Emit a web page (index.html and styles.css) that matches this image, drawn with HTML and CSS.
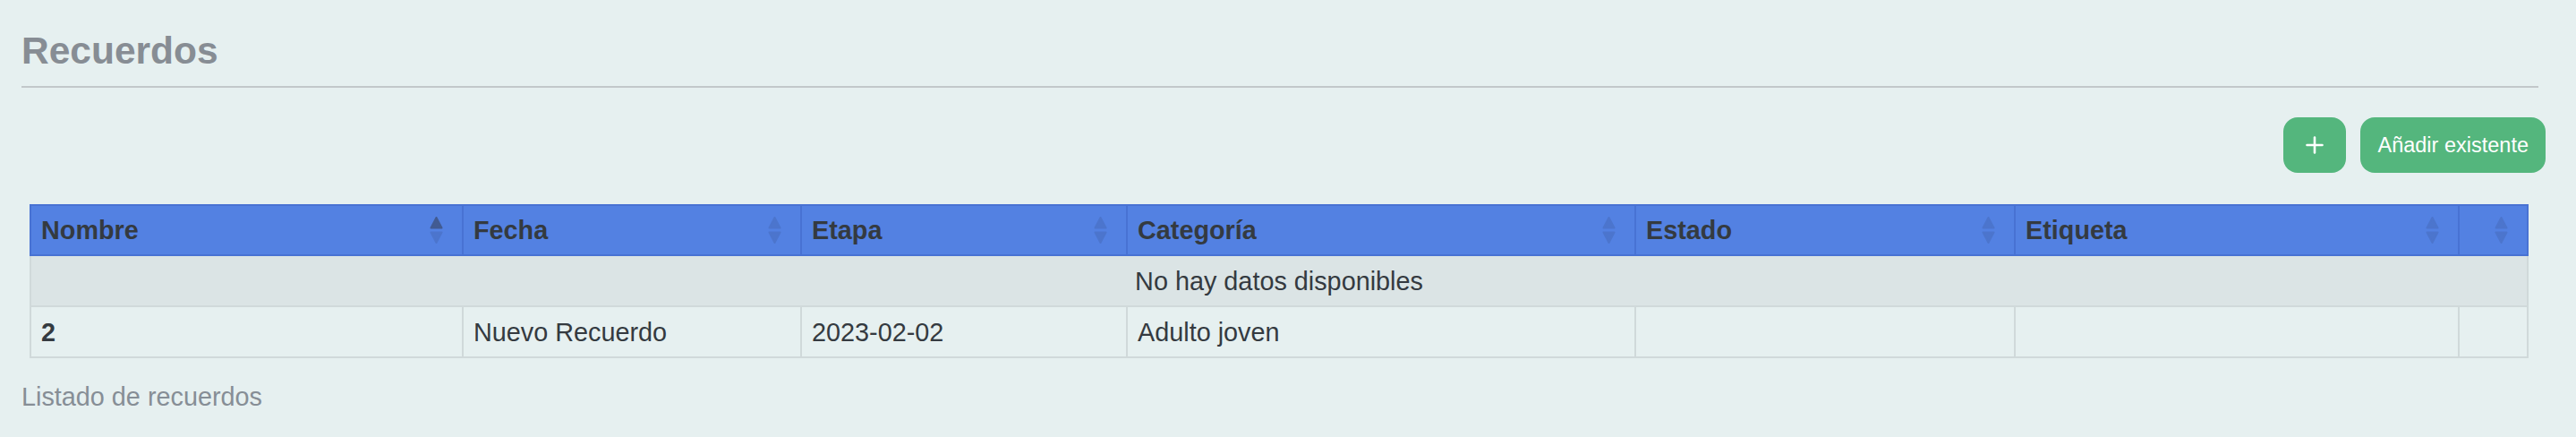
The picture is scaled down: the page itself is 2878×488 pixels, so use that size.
FILE: index.html
```html
<!DOCTYPE html>
<html lang="es">
<head>
<meta charset="utf-8">
<title>Recuerdos</title>
<link rel="stylesheet" href="styles.css">
</head>
<body>
<main class="page">
  <header class="page-header">
    <h1 class="page-title">Recuerdos</h1>
  </header>

  <div class="toolbar">
    <button class="btn btn-icon" type="button" aria-label="Añadir">
      <svg width="20" height="20" viewBox="0 0 20 20" aria-hidden="true"><path d="M10 1.5v17M1.5 10h17" stroke="#fff" stroke-width="2.6" stroke-linecap="round" fill="none"/></svg>
    </button>
    <button class="btn" type="button">Añadir existente</button>
  </div>

  <div class="table-wrap">
    <table class="records">
      <colgroup>
        <col class="c-nombre"><col class="c-fecha"><col class="c-etapa"><col class="c-categoria"><col class="c-estado"><col class="c-etiqueta"><col class="c-acciones">
      </colgroup>
      <thead>
        <tr>
          <th><div class="th-inner"><span>Nombre</span><svg class="sort sort-asc" width="15" height="32" viewBox="0 0 15 32" aria-hidden="true"><polygon class="up" points="7.5,2 13.5,13.5 1.5,13.5"/><polygon class="down" points="1.5,18.5 13.5,18.5 7.5,30"/></svg></div></th>
          <th><div class="th-inner"><span>Fecha</span><svg class="sort" width="15" height="32" viewBox="0 0 15 32" aria-hidden="true"><polygon class="up" points="7.5,2 13.5,13.5 1.5,13.5"/><polygon class="down" points="1.5,18.5 13.5,18.5 7.5,30"/></svg></div></th>
          <th><div class="th-inner"><span>Etapa</span><svg class="sort" width="15" height="32" viewBox="0 0 15 32" aria-hidden="true"><polygon class="up" points="7.5,2 13.5,13.5 1.5,13.5"/><polygon class="down" points="1.5,18.5 13.5,18.5 7.5,30"/></svg></div></th>
          <th><div class="th-inner"><span>Categoría</span><svg class="sort" width="15" height="32" viewBox="0 0 15 32" aria-hidden="true"><polygon class="up" points="7.5,2 13.5,13.5 1.5,13.5"/><polygon class="down" points="1.5,18.5 13.5,18.5 7.5,30"/></svg></div></th>
          <th><div class="th-inner"><span>Estado</span><svg class="sort" width="15" height="32" viewBox="0 0 15 32" aria-hidden="true"><polygon class="up" points="7.5,2 13.5,13.5 1.5,13.5"/><polygon class="down" points="1.5,18.5 13.5,18.5 7.5,30"/></svg></div></th>
          <th><div class="th-inner"><span>Etiqueta</span><svg class="sort" width="15" height="32" viewBox="0 0 15 32" aria-hidden="true"><polygon class="up" points="7.5,2 13.5,13.5 1.5,13.5"/><polygon class="down" points="1.5,18.5 13.5,18.5 7.5,30"/></svg></div></th>
          <th class="th-last"><div class="th-inner th-inner-end"><svg class="sort" width="15" height="32" viewBox="0 0 15 32" aria-hidden="true"><polygon class="up" points="7.5,2 13.5,13.5 1.5,13.5"/><polygon class="down" points="1.5,18.5 13.5,18.5 7.5,30"/></svg></div></th>
        </tr>
      </thead>
      <tbody>
        <tr class="empty-row">
          <td colspan="7">No hay datos disponibles</td>
        </tr>
        <tr>
          <td class="strong">2</td>
          <td>Nuevo Recuerdo</td>
          <td>2023-02-02</td>
          <td>Adulto joven</td>
          <td></td>
          <td></td>
          <td></td>
        </tr>
      </tbody>
    </table>
  </div>

  <p class="table-caption">Listado de recuerdos</p>
</main>
</body>
</html>
```

FILE: styles.css
```css
html, body {
  margin: 0;
  padding: 0;
}

body {
  background: #e6f0f0;
  font-family: "Liberation Sans", Arial, sans-serif;
  color: #343a40;
}

.page {
  padding: 32px 34px 0 24px;
}

.page-header {
  margin-right: 8px;
  padding-bottom: 14px;
  border-bottom: 2px solid #c2c8ca;
}

.page-title {
  margin: 0;
  font-size: 42.5px;
  line-height: 50px;
  font-weight: 700;
  color: #878d94;
}

.toolbar {
  display: flex;
  justify-content: flex-end;
  gap: 16px;
  margin-top: 33px;
}

.btn {
  height: 62px;
  border: 0;
  border-radius: 16px;
  background: #54b67d;
  color: #ffffff;
  font-family: "Liberation Sans", Arial, sans-serif;
  font-size: 23.5px;
  padding: 0 19px;
  cursor: pointer;
}

.btn-icon {
  width: 70px;
  padding: 0;
  display: flex;
  align-items: center;
  justify-content: center;
}

.table-wrap {
  margin: 35px 19px 0 9px;
}

.records {
  width: 2790px;
  border-collapse: collapse;
  table-layout: fixed;
  font-size: 28.8px;
  line-height: 34px;
}

.c-nombre { width: 483px; }
.c-fecha { width: 378px; }
.c-etapa { width: 364px; }
.c-categoria { width: 568px; }
.c-estado { width: 424px; }
.c-etiqueta { width: 496px; }
.c-acciones { width: 77px; }

.records th {
  background: #5381e2;
  border: 2px solid #4872d3;
  text-align: left;
  font-weight: 700;
  padding: 10px 21px 10px 11px;
  color: #343a40;
}

.th-inner {
  display: flex;
  align-items: center;
  justify-content: space-between;
}

.th-inner-end {
  justify-content: flex-end;
}

.sort {
  flex: none;
  display: block;
}

.sort polygon {
  fill: #4c75cd;
  stroke: #4c75cd;
  stroke-width: 2;
  stroke-linejoin: round;
}

.sort-asc .up {
  fill: #425b92;
  stroke: #425b92;
}

.records td {
  border: 2px solid #d0d9da;
  padding: 11px 11px 10px;
  height: 34px;
  white-space: nowrap;
}

.records td.strong {
  font-weight: 700;
}

.empty-row td {
  background: #dbe4e5;
  text-align: center;
}

.table-caption {
  margin: 26px 0 0;
  font-size: 28.8px;
  line-height: 34px;
  color: #868e96;
}
```
